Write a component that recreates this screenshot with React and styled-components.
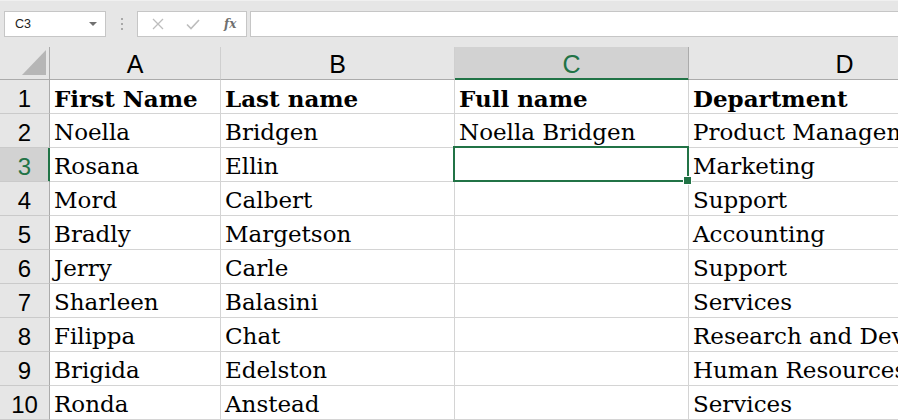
import styled, { createGlobalStyle } from "styled-components";

const green = "#217346";
const grid = "#d4d4d4";

const GlobalStyle = createGlobalStyle`
  html, body {
    margin: 0;
    padding: 0;
    background: #ffffff;
    overflow: hidden;
  }
  * {
    box-sizing: border-box;
  }
`;

const Sheet = styled.div`
  width: 898px;
  height: 420px;
  overflow: hidden;
  background-color: #e6e6e6;
  border-top: 1px solid #f0f0f0;
`;

const FormulaBar = styled.div`
  display: flex;
  align-items: center;
  height: 46px;
  padding: 10px 0 10px 4px;
`;

const NameBox = styled.div`
  position: relative;
  display: flex;
  align-items: center;
  width: 102px;
  height: 26px;
  padding-left: 10px;
  background-color: #ffffff;
  border: 1px solid #c6c6c6;
  font-family: "Liberation Sans", Arial, sans-serif;
  font-size: 12.5px;
  color: #222;
`;

const Caret = styled.span`
  position: absolute;
  right: 8px;
  top: 10px;
  width: 0;
  height: 0;
  border-left: 4px solid transparent;
  border-right: 4px solid transparent;
  border-top: 4px solid #707070;
`;

const Grip = styled.div`
  display: flex;
  flex-direction: column;
  gap: 3px;
  margin: 0 14px 0 15px;

  span {
    width: 2px;
    height: 2px;
    background-color: #a8a8a8;
  }
`;

const FxBox = styled.div`
  display: flex;
  align-items: center;
  width: 110px;
  height: 26px;
  padding-left: 14px;
  gap: 22px;
  background-color: #ffffff;
  border: 1px solid #c6c6c6;
`;

const FxLabel = styled.span`
  font-family: "DejaVu Serif", Georgia, serif;
  font-style: italic;
  font-weight: bold;
  font-size: 12px;
  color: #6f6f6f;
  margin-left: 2px;
`;

const FormulaInput = styled.div`
  flex: 1;
  height: 26px;
  margin-left: 3px;
  margin-right: -2px;
  background-color: #ffffff;
  border: 1px solid #c6c6c6;
`;

const Row = styled.div`
  display: flex;
  height: ${(p) => (p.$head ? 33 : 34)}px;
`;

const Corner = styled.div`
  display: flex;
  align-items: flex-end;
  justify-content: flex-end;
  flex: 0 0 50px;
  padding: 0 3px 4px 0;
  border-right: 1px solid #ababab;
  border-bottom: 1px solid #ababab;
`;

const ColHeader = styled.div`
  flex: 0 0 ${(p) => p.$w}px;
  height: 33px;
  padding-top: 1px;
  text-align: center;
  line-height: 33px;
  font-family: "Liberation Sans", Arial, sans-serif;
  font-size: 25px;
  color: ${(p) => (p.$active ? green : "#000")};
  background-color: ${(p) => (p.$active ? "#d2d2d2" : "transparent")};
  border-right: 1px solid ${(p) => (p.$active ? "#ababab" : "#cfcfcf")};
  border-bottom: 1px solid ${(p) => (p.$active ? green : "#ababab")};
  box-shadow: ${(p) => (p.$active ? `inset 0 -1px 0 ${green}` : "none")};
`;

const RowHeader = styled.div`
  flex: 0 0 50px;
  height: 34px;
  padding-top: 2px;
  text-align: center;
  line-height: 33px;
  font-family: "Liberation Sans", Arial, sans-serif;
  font-size: 24px;
  color: ${(p) => (p.$active ? green : "#000")};
  background-color: ${(p) => (p.$active ? "#d2d2d2" : "#e6e6e6")};
  border-right: 1px solid ${(p) => (p.$active ? green : "#ababab")};
  border-bottom: 1px solid #cacaca;
  box-shadow: ${(p) => (p.$active ? `inset -1px 0 0 ${green}` : "none")};
`;

const Cell = styled.div`
  position: relative;
  flex: 0 0 ${(p) => p.$w}px;
  height: 34px;
  padding: 2px 0 0 4px;
  line-height: 33px;
  white-space: nowrap;
  font-family: "DejaVu Serif", Georgia, serif;
  font-size: 23px;
  font-weight: ${(p) => (p.$bold ? "bold" : "normal")};
  color: #000;
  background-color: #ffffff;
  border-right: 1px solid ${grid};
  border-bottom: 1px solid ${grid};
  z-index: ${(p) => (p.$selected ? 2 : "auto")};

  ${(p) =>
    p.$selected &&
    `
    &::after {
      content: "";
      position: absolute;
      left: -2px;
      top: -2px;
      right: -1px;
      bottom: -1px;
      border: 2px solid ${green};
    }
    &::before {
      content: "";
      position: absolute;
      right: -4px;
      bottom: -4px;
      width: 7px;
      height: 7px;
      background-color: ${green};
      border: 1px solid #ffffff;
      z-index: 3;
    }
  `}
`;

const columns = [
  { key: "A", w: 171 },
  { key: "B", w: 234 },
  { key: "C", w: 234 },
  { key: "D", w: 312 },
];

const rows = [
  ["First Name", "Last name", "Full name", "Department"],
  ["Noella", "Bridgen", "Noella Bridgen", "Product Management"],
  ["Rosana", "Ellin", "", "Marketing"],
  ["Mord", "Calbert", "", "Support"],
  ["Bradly", "Margetson", "", "Accounting"],
  ["Jerry", "Carle", "", "Support"],
  ["Sharleen", "Balasini", "", "Services"],
  ["Filippa", "Chat", "", "Research and Development"],
  ["Brigida", "Edelston", "", "Human Resources"],
  ["Ronda", "Anstead", "", "Services"],
];

const activeCol = 2;
const activeRow = 2;

function CancelIcon() {
  return (
    <svg width="12" height="12" viewBox="0 0 12 12">
      <path d="M1 1L11 11M11 1L1 11" stroke="#bdbdbd" strokeWidth="1.3" fill="none" />
    </svg>
  );
}

function CheckIcon() {
  return (
    <svg width="14" height="11" viewBox="0 0 14 11">
      <path d="M1 5.5L5 9.5L13 1" stroke="#bdbdbd" strokeWidth="1.6" fill="none" />
    </svg>
  );
}

function CornerMark() {
  return (
    <svg width="24" height="25" viewBox="0 0 24 25">
      <polygon points="24,0 24,25 0,25" fill="#b6b6b6" />
    </svg>
  );
}

function App() {
  return (
    <Sheet>
      <GlobalStyle />
      <FormulaBar>
        <NameBox>
          C3
          <Caret />
        </NameBox>
        <Grip>
          <span />
          <span />
          <span />
        </Grip>
        <FxBox>
          <CancelIcon />
          <CheckIcon />
          <FxLabel>fx</FxLabel>
        </FxBox>
        <FormulaInput />
      </FormulaBar>

      <Row $head>
        <Corner>
          <CornerMark />
        </Corner>
        {columns.map((c, i) => (
          <ColHeader key={c.key} $w={c.w} $active={i === activeCol}>
            {c.key}
          </ColHeader>
        ))}
      </Row>

      {rows.map((r, ri) => (
        <Row key={ri}>
          <RowHeader $active={ri === activeRow}>{ri + 1}</RowHeader>
          {r.map((v, ci) => (
            <Cell
              key={ci}
              $w={columns[ci].w}
              $bold={ri === 0}
              $selected={ri === activeRow && ci === activeCol}
            >
              {v}
            </Cell>
          ))}
        </Row>
      ))}
    </Sheet>
  );
}

export default App;
